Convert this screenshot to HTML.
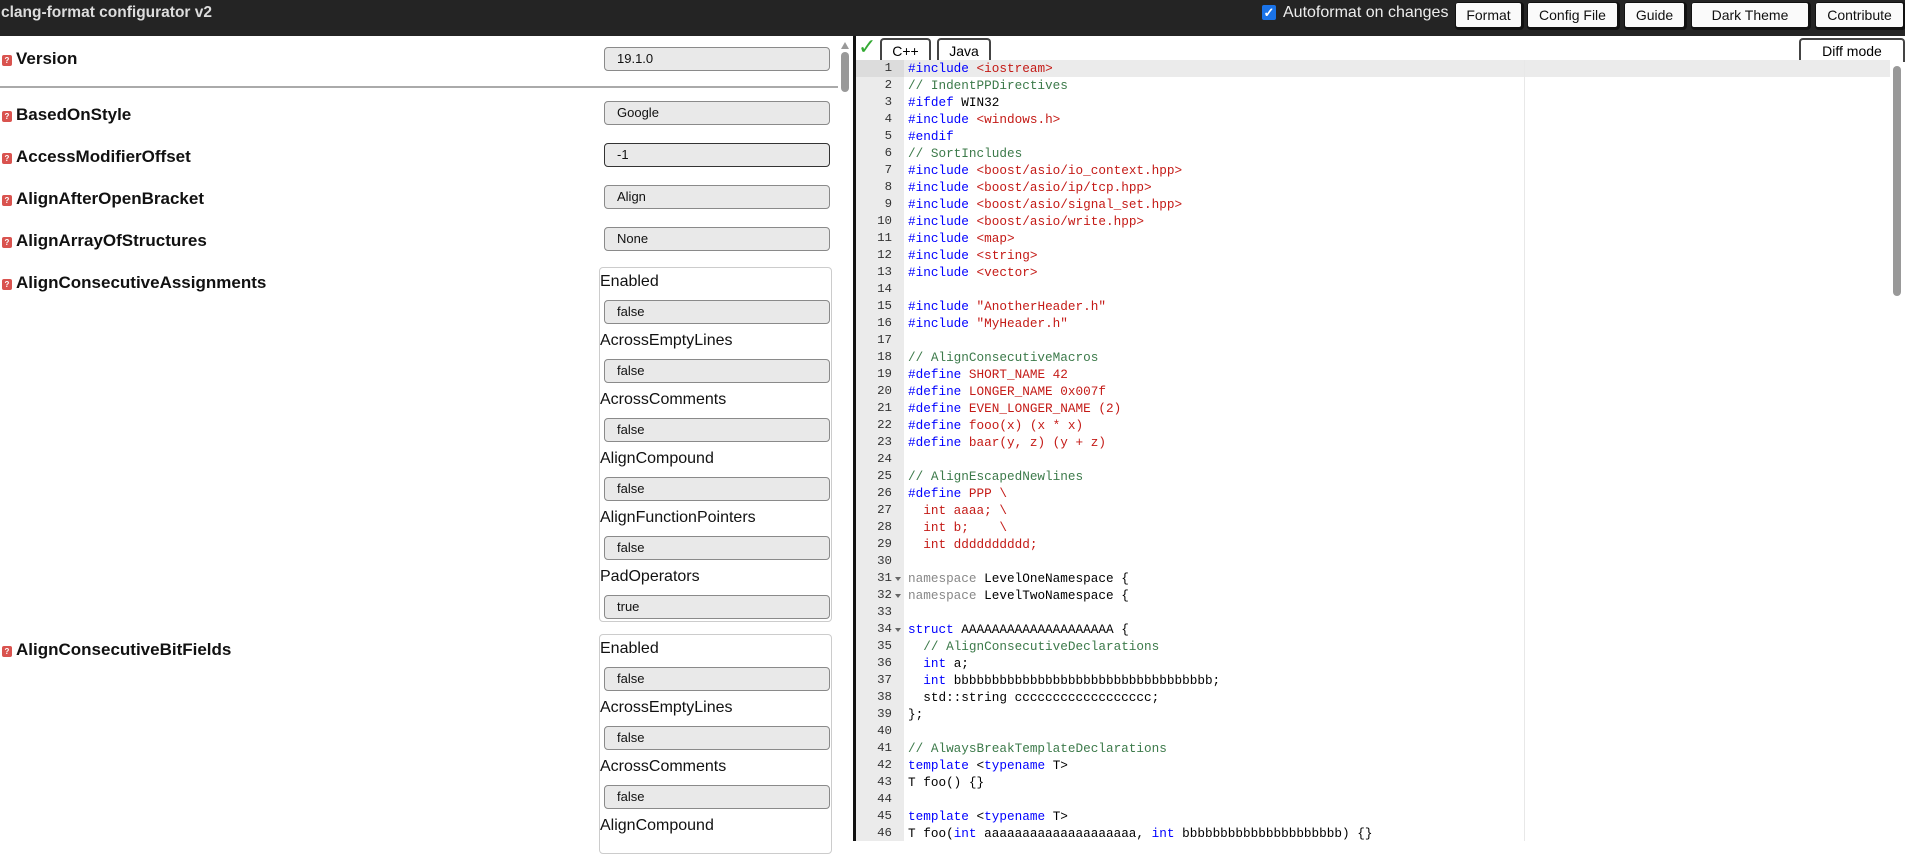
<!DOCTYPE html>
<html><head><meta charset="utf-8"><style>
*{box-sizing:border-box;margin:0;padding:0}
body{width:1905px;height:841px;overflow:hidden;background:#fff;font-family:"Liberation Sans",sans-serif;position:relative}
#hdr{position:absolute;left:0;top:0;width:1905px;height:36px;background:#242424}
#title{position:absolute;left:1px;top:4px;color:#ddd;font-weight:bold;font-size:15.5px}
.btn{position:absolute;top:3px;height:24px;background:#fafafa;border-radius:2px;box-shadow:1px 1px 0 2px #111;font-size:14px;text-align:center;line-height:24px;color:#111}
#cb{position:absolute;left:1262px;top:5px;width:14px;height:15px;background:#1a73e8;border-radius:2px;color:#fff;font-size:13px;line-height:15px;text-align:center;font-weight:bold}
#aof{position:absolute;left:1283px;top:4px;color:#eee;font-size:16px}
.lab{position:absolute;left:2px;font-weight:bold;font-size:17px;color:#111}
.lab i{display:inline-block;width:10px;height:11px;background:#d9534f;border-radius:2px;margin-right:4px;vertical-align:1px;color:#fff;font-size:8px;font-style:normal;text-align:center;line-height:11px}
.sel{position:absolute;left:604px;width:226px;height:24px;background:#e9e9e9;border:1px solid #8a8a8a;border-radius:4px;font-size:13px;padding-left:12px;line-height:22px;color:#111}
.sub{position:absolute;left:600px;font-size:16px;color:#111}
.box{position:absolute;left:599px;width:233px;border:1px solid #ccc;border-radius:4px}
#div{position:absolute;left:853px;top:36px;width:3px;height:805px;background:#111}
#gut{position:absolute;left:856px;top:60px;width:48px;height:781px;background:#ebebeb}
.ln{position:absolute;left:856px;width:36px;text-align:right;font-family:"Liberation Mono",monospace;font-size:12.4px;color:#333;line-height:17px}
.cd{position:absolute;left:908px;font-family:"Liberation Mono",monospace;font-size:12.7px;line-height:17px;white-space:pre;color:#000}
.k{color:#0000ff}.s{color:#c41a16}.c{color:#3c7a4a}.g{color:#888}
.tab{position:absolute;top:38px;height:24px;border:2px solid #444;border-bottom:none;border-radius:4px 4px 0 0;font-size:14px;text-align:center;line-height:22px;background:#fff}
</style></head><body>
<div id="hdr"><div id="title">clang-format configurator v2</div>
<div id="cb">✓</div><div id="aof">Autoformat on changes</div>
<div class="btn" style="left:1456px;width:65px">Format</div>
<div class="btn" style="left:1528px;width:89px">Config File</div>
<div class="btn" style="left:1625px;width:59px">Guide</div>
<div class="btn" style="left:1692px;width:116px">Dark Theme</div>
<div class="btn" style="left:1816px;width:87px">Contribute</div>
</div>

<div class="lab" style="top:49px"><i>?</i>Version</div><div class="sel" style="top:47px">19.1.0</div>
<div style="position:absolute;left:0;top:86px;width:838px;height:2px;background:#aaa"></div>
<div class="lab" style="top:105px"><i>?</i>BasedOnStyle</div><div class="sel" style="top:101px">Google</div>
<div class="lab" style="top:147px"><i>?</i>AccessModifierOffset</div><div class="sel" style="top:143px;border-color:#333">-1</div>
<div class="lab" style="top:189px"><i>?</i>AlignAfterOpenBracket</div><div class="sel" style="top:185px">Align</div>
<div class="lab" style="top:231px"><i>?</i>AlignArrayOfStructures</div><div class="sel" style="top:227px">None</div>
<div class="lab" style="top:273px"><i>?</i>AlignConsecutiveAssignments</div>
<div class="box" style="top:267px;height:355px"></div>
<div class="sub" style="top:273px">Enabled</div><div class="sel" style="top:300px">false</div>
<div class="sub" style="top:332px">AcrossEmptyLines</div><div class="sel" style="top:359px">false</div>
<div class="sub" style="top:391px">AcrossComments</div><div class="sel" style="top:418px">false</div>
<div class="sub" style="top:450px">AlignCompound</div><div class="sel" style="top:477px">false</div>
<div class="sub" style="top:509px">AlignFunctionPointers</div><div class="sel" style="top:536px">false</div>
<div class="sub" style="top:568px">PadOperators</div><div class="sel" style="top:595px">true</div>
<div class="lab" style="top:640px"><i>?</i>AlignConsecutiveBitFields</div>
<div class="box" style="top:634px;height:220px"></div>
<div class="sub" style="top:640px">Enabled</div><div class="sel" style="top:667px">false</div>
<div class="sub" style="top:699px">AcrossEmptyLines</div><div class="sel" style="top:726px">false</div>
<div class="sub" style="top:758px">AcrossComments</div><div class="sel" style="top:785px">false</div>
<div class="sub" style="top:817px">AlignCompound</div>
<div style="position:absolute;left:839px;top:42px;width:12px;height:56px"><div style="margin:0 auto;width:0;height:0;border-left:4px solid transparent;border-right:4px solid transparent;border-bottom:7px solid #999"></div><div style="margin:3px auto 0;width:8px;height:40px;background:#999;border-radius:4px"></div></div>

<div id="div"></div>
<div style="position:absolute;left:858px;top:34px;color:#3a3;font-size:22px">✓</div>
<div class="tab" style="left:880px;width:51px">C++</div>
<div class="tab" style="left:937px;width:54px">Java</div>
<div class="tab" style="left:1799px;width:106px">Diff mode</div>
<div style="position:absolute;left:856px;top:60px;width:1034px;height:17px;background:#ebebeb"></div>
<div id="gut"></div>
<div style="position:absolute;left:856px;top:60px;width:48px;height:17px;background:#dcdcdc"></div>
<div style="position:absolute;left:1524px;top:60px;width:1px;height:781px;background:#e8e8e8"></div>
<div style="position:absolute;left:1893px;top:66px;width:8px;height:230px;background:#999;border-radius:4px"></div>
<div id="code"></div>
<script>
var L=[
'<span class="k">#include</span> <span class="s">&lt;iostream&gt;</span>',
'<span class="c">// IndentPPDirectives</span>',
'<span class="k">#ifdef</span> WIN32',
'<span class="k">#include</span> <span class="s">&lt;windows.h&gt;</span>',
'<span class="k">#endif</span>',
'<span class="c">// SortIncludes</span>',
'<span class="k">#include</span> <span class="s">&lt;boost/asio/io_context.hpp&gt;</span>',
'<span class="k">#include</span> <span class="s">&lt;boost/asio/ip/tcp.hpp&gt;</span>',
'<span class="k">#include</span> <span class="s">&lt;boost/asio/signal_set.hpp&gt;</span>',
'<span class="k">#include</span> <span class="s">&lt;boost/asio/write.hpp&gt;</span>',
'<span class="k">#include</span> <span class="s">&lt;map&gt;</span>',
'<span class="k">#include</span> <span class="s">&lt;string&gt;</span>',
'<span class="k">#include</span> <span class="s">&lt;vector&gt;</span>',
'',
'<span class="k">#include</span> <span class="s">"AnotherHeader.h"</span>',
'<span class="k">#include</span> <span class="s">"MyHeader.h"</span>',
'',
'<span class="c">// AlignConsecutiveMacros</span>',
'<span class="k">#define</span> <span class="s">SHORT_NAME 42</span>',
'<span class="k">#define</span> <span class="s">LONGER_NAME 0x007f</span>',
'<span class="k">#define</span> <span class="s">EVEN_LONGER_NAME (2)</span>',
'<span class="k">#define</span> <span class="s">fooo(x) (x * x)</span>',
'<span class="k">#define</span> <span class="s">baar(y, z) (y + z)</span>',
'',
'<span class="c">// AlignEscapedNewlines</span>',
'<span class="k">#define</span> <span class="s">PPP \\</span>',
'<span class="s">  int aaaa; \\</span>',
'<span class="s">  int b;    \\</span>',
'<span class="s">  int dddddddddd;</span>',
'',
'<span class="g">namespace</span> LevelOneNamespace {',
'<span class="g">namespace</span> LevelTwoNamespace {',
'',
'<span class="k">struct</span> AAAAAAAAAAAAAAAAAAAA {',
'  <span class="c">// AlignConsecutiveDeclarations</span>',
'  <span class="k">int</span> a;',
'  <span class="k">int</span> bbbbbbbbbbbbbbbbbbbbbbbbbbbbbbbbbb;',
'  std::string cccccccccccccccccc;',
'};',
'',
'<span class="c">// AlwaysBreakTemplateDeclarations</span>',
'<span class="k">template</span> &lt;<span class="k">typename</span> T&gt;',
'T foo() {}',
'',
'<span class="k">template</span> &lt;<span class="k">typename</span> T&gt;',
'T foo(<span class="k">int</span> aaaaaaaaaaaaaaaaaaaa, <span class="k">int</span> bbbbbbbbbbbbbbbbbbbbb) {}'
];
var h='';
for(var i=0;i<L.length;i++){var t=60+i*17;
h+='<div class="ln" style="top:'+t+'px">'+(i+1)+'</div>';
if(i==30||i==31||i==33)h+='<div style="position:absolute;left:895px;top:'+(t+7)+'px;width:0;height:0;border-left:3px solid transparent;border-right:3px solid transparent;border-top:4px solid #666"></div>';
h+='<div class="cd" style="top:'+t+'px">'+L[i]+'</div>';}
document.getElementById('code').innerHTML=h;
</script>
</body></html>
